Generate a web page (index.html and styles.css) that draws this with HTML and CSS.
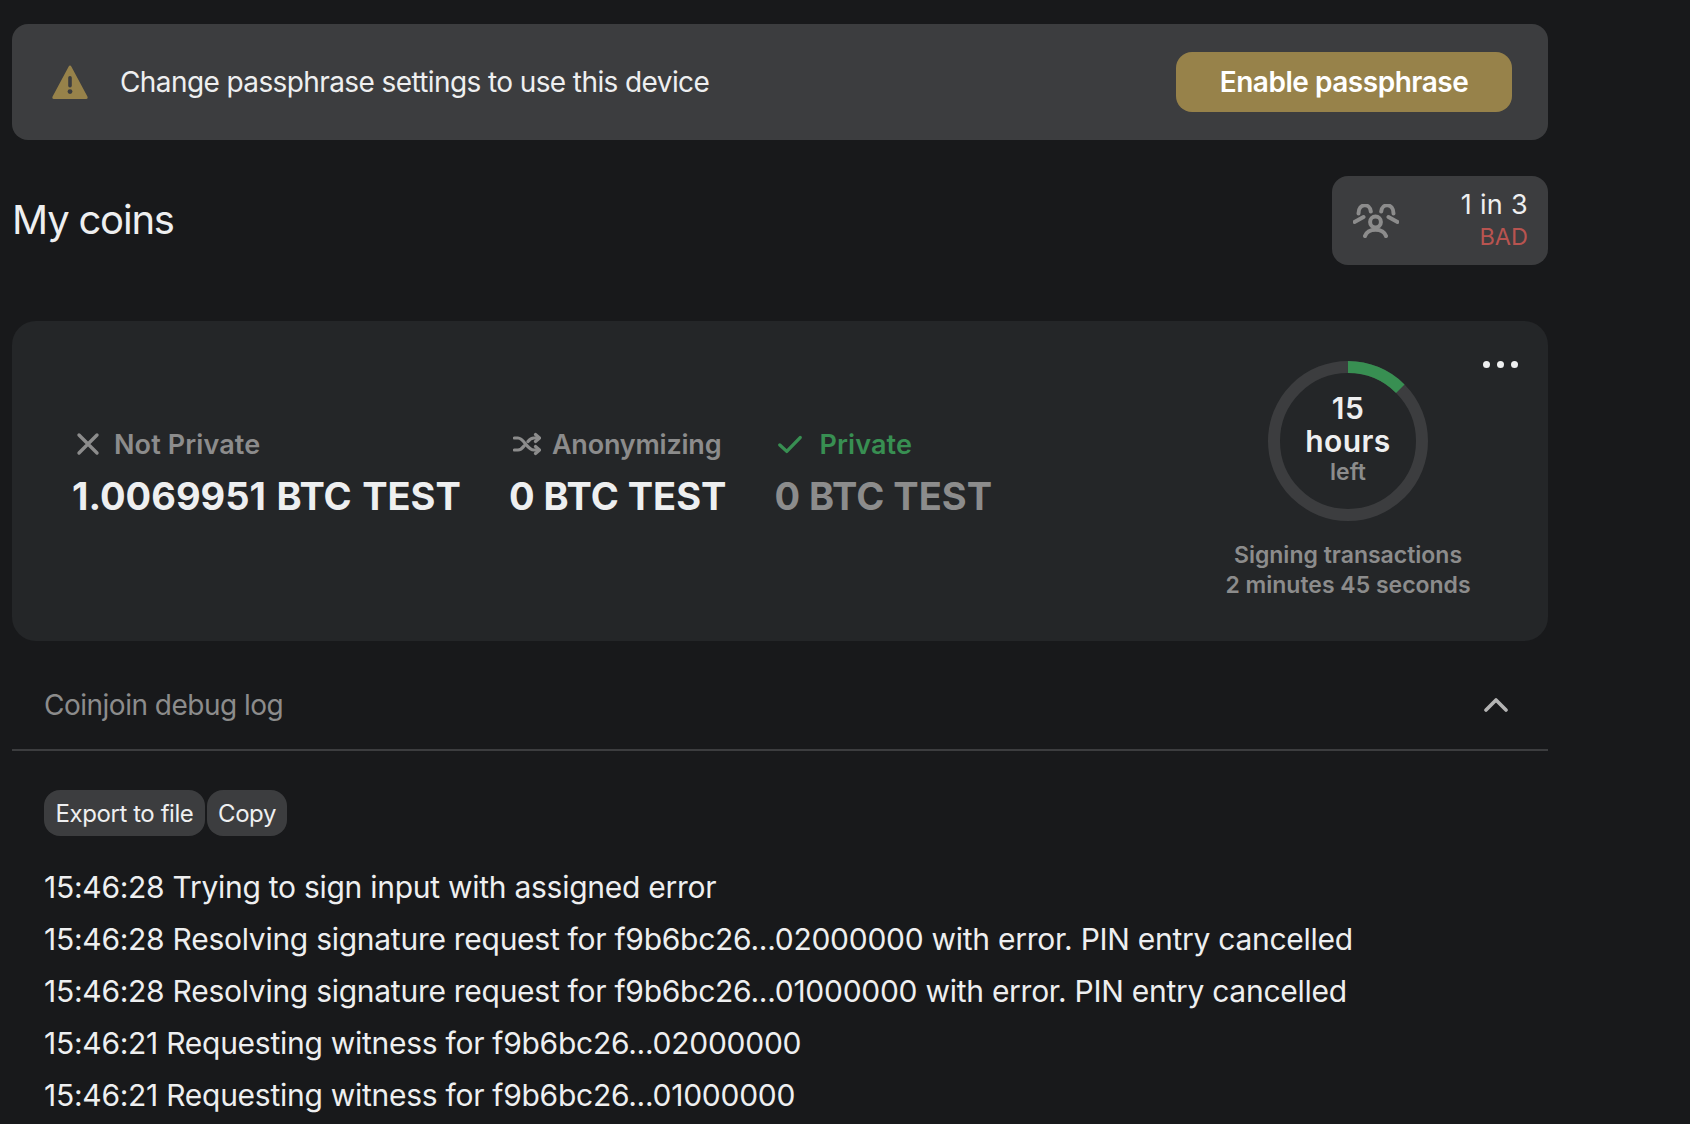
FILE: index.html
```html
<!DOCTYPE html>
<html lang="en">
<head>
<meta charset="utf-8">
<title>My coins</title>
<link rel="stylesheet" href="styles.css">
</head>
<body>
<main class="page">
  <section class="banner">
    <div class="banner-msg">
      <svg class="warn-icon" viewBox="0 0 36 34"><path d="M18 0.5 C18.6 0.5 19 0.9 19.3 1.6 L35.4 31.6 C36 32.8 35.6 34 34.2 34 L1.8 34 C0.4 34 0 32.8 0.6 31.6 L16.7 1.6 C17 0.9 17.4 0.5 18 0.5Z" fill="#97824a"/><rect x="16.2" y="11" width="3.6" height="11.5" rx="1.8" fill="#3c3d3f"/><circle cx="18" cy="26.6" r="2.4" fill="#3c3d3f"/></svg>
      <span>Change passphrase settings to use this device</span>
    </div>
    <button class="enable-btn">Enable passphrase</button>
  </section>

  <header class="coins-head">
    <h1>My coins</h1>
    <div class="anon-badge">
      <svg class="users-icon" viewBox="0 0 46 34" fill="none" stroke="#8c8c8c" stroke-width="4" stroke-linecap="round"><circle cx="22.500" cy="18" r="5.400"/><path d="M12 32 C15 23.500 30 23.500 33 32"/><path d="M5.500 9.500 C5.500 -1 17 -1 17.800 7.500"/><path d="M1.500 18 L10.500 13"/><path d="M40.500 9.500 C40.500 -1 29 -1 28.200 7.500"/><path d="M44.500 18 L35.500 13"/></svg>
      <div class="anon-text"><span class="anon-num">1 in 3</span><span class="anon-bad">BAD</span></div>
    </div>
  </header>

  <section class="card">
    <div class="balances">
      <div class="balance">
        <div class="bal-label"><svg class="bal-icon" viewBox="0 0 24 24" fill="none" stroke="#8c8c8c" stroke-width="3.400" stroke-linecap="round"><path d="M3 3 L21 21 M21 3 L3 21"/></svg>Not Private</div>
        <div class="bal-value is-long">1.0069951 BTC TEST</div>
      </div>
      <div class="balance">
        <div class="bal-label is-tight"><svg class="shuffle-icon" viewBox="0 0 28 24" fill="none" stroke="#8c8c8c" stroke-width="3.200" stroke-linecap="round" stroke-linejoin="round"><path d="M1.500 6 H5 C11 6 14 18 21 18 H25 M1.500 18 H5 C7.500 18 9.500 16 11 14 M15 9.500 C16.500 7.500 18.500 6 21 6 H25"/><path d="M22.500 2.500 L26.500 6 L22.500 9.500 M22.500 14.500 L26.500 18 L22.500 21.500"/></svg>Anonymizing</div>
        <div class="bal-value">0 BTC TEST</div>
      </div>
      <div class="balance">
        <div class="bal-label is-green"><svg class="check-icon" viewBox="0 0 26 24" fill="none" stroke="#388f52" stroke-width="3.600" stroke-linecap="round" stroke-linejoin="round"><path d="M2 13 L9.500 20 L24 5"/></svg>Private</div>
        <div class="bal-value is-muted">0 BTC TEST</div>
      </div>
    </div>
    <div class="status">
      <div class="ring">
        <svg class="ring-svg" viewBox="0 0 160 160" fill="none"><circle cx="80" cy="80" r="74" stroke="#3c3d3f" stroke-width="12"/><path d="M80 6 A74 74 0 0 1 132.300 27.700" stroke="#388f52" stroke-width="12"/></svg>
        <div class="ring-text"><span class="ring-num">15</span><span class="ring-num">hours</span><span class="ring-left">left</span></div>
      </div>
      <div class="status-text">Signing transactions<br>2 minutes 45 seconds</div>
    </div>
    <div class="dots"><i></i><i></i><i></i></div>
  </section>

  <section class="log">
    <div class="log-head">
      <span>Coinjoin debug log</span>
      <svg class="chevron" viewBox="0 0 24 14" fill="none" stroke="#b4b4b4" stroke-width="3.600" stroke-linecap="round" stroke-linejoin="round"><path d="M2 12 L12 2 L22 12"/></svg>
    </div>
    <div class="log-body">
      <div class="log-actions"><button class="small-btn">Export to file</button><button class="small-btn">Copy</button></div>
      <p class="log-line">15:46:28 Trying to sign input with assigned error</p>
      <p class="log-line">15:46:28 Resolving signature request for f9b6bc26...02000000 with error. PIN entry cancelled</p>
      <p class="log-line">15:46:28 Resolving signature request for f9b6bc26...01000000 with error. PIN entry cancelled</p>
      <p class="log-line">15:46:21 Requesting witness for f9b6bc26...02000000</p>
      <p class="log-line">15:46:21 Requesting witness for f9b6bc26...01000000</p>
    </div>
  </section>
</main>
</body>
</html>
```
FILE: styles.css
```css
* { box-sizing: border-box; }
html, body { margin: 0; height: 100%; overflow: hidden; background: #18191b; }
body { font-family: Inter, "Noto Sans", sans-serif; color: #eeeff0; }
.page { width: 1536px; margin-left: 12px; padding-top: 24px; }

.banner { height: 116px; background: #3c3d3f; border-radius: 16px; display: flex; align-items: center; justify-content: space-between; padding: 0 36px 0 40px; }
.banner-msg { display: flex; align-items: center; gap: 32px; font-size: 28px; letter-spacing: -0.6px; font-weight: 400; }
.banner-msg span { padding-bottom: 1px; }
.warn-icon { width: 36px; height: 34px; }
.enable-btn { width: 336px; height: 60px; padding: 0 0 1px; border: 0; border-radius: 16px; background: #97824a; color: #fff; font: 600 28px Inter, sans-serif; letter-spacing: -0.47px; }

.coins-head { display: flex; justify-content: space-between; align-items: center; margin-top: 36px; }
.coins-head h1 { margin: 0 0 3px; font-size: 40px; letter-spacing: -1.2px; font-weight: 400; color: #eeeff0; }
.anon-badge { width: 216px; height: 89px; background: #3c3d3f; border-radius: 16px; display: flex; align-items: center; justify-content: space-between; padding: 0 20px 0 21px; }
.users-icon { width: 46px; height: 34px; }
.anon-text { display: flex; flex-direction: column; align-items: flex-end; }
.anon-num { font-size: 27px; line-height: 32px; letter-spacing: 0.3px; }
.anon-bad { font-size: 23.500px; line-height: 32px; color: #b85450; }

.card { position: relative; height: 320px; margin-top: 56px; background: #242628; border-radius: 24px; display: flex; justify-content: space-between; align-items: flex-start; padding: 40px 70px 0 60px; }
.balances { display: flex; gap: 48px; margin-top: 64px; }
.bal-label { display: flex; align-items: center; gap: 14px; height: 38px; font-size: 27px; letter-spacing: 0.1px; font-weight: 600; color: #8c8c8c; padding-left: 4px; }
.bal-label.is-tight { letter-spacing: -0.2px; }
.bal-label.is-green { color: #388f52; }
.bal-icon { width: 24px; height: 24px; flex: none; }
.shuffle-icon { width: 28px; height: 24px; flex: none; margin-right: -3px; }
.check-icon { width: 24px; height: 24px; flex: none; margin-right: 3px; }
.bal-value { margin-top: 8px; font-size: 38px; line-height: 50px; font-weight: 700; white-space: nowrap; }
.bal-value.is-long { word-spacing: 1.500px; }
.bal-value.is-muted { color: #8c8c8c; }

.status { width: 260px; display: flex; flex-direction: column; align-items: center; }
.ring { position: relative; width: 160px; height: 160px; }
.ring-svg { display: block; width: 160px; height: 160px; }
.ring-text { position: absolute; inset: 0; padding-bottom: 3px; display: flex; flex-direction: column; align-items: center; justify-content: center; }
.ring-num { font-size: 30px; letter-spacing: 0.4px; font-weight: 600; line-height: 33px; }
.ring-left { font-size: 23px; font-weight: 600; line-height: 29px; color: #8c8c8c; }
.status-text { margin-top: 19px; font-size: 23px; line-height: 30px; font-weight: 600; color: #8c8c8c; text-align: center; white-space: nowrap; }
.dots { position: absolute; top: 40px; right: 30px; display: flex; gap: 7px; }
.dots i { width: 7px; height: 7px; border-radius: 50%; background: #eeeff0; }

.log-head { height: 110px; padding: 19px 40px 0 32px; border-bottom: 2px solid #3c3d3f; display: flex; align-items: center; justify-content: space-between; font-size: 28px; letter-spacing: -0.5px; color: #8c8c8c; }
.chevron { width: 24px; height: 14px; }
.log-body { padding: 39px 32px 0; }
.log-actions { display: flex; gap: 2px; margin-bottom: 25px; }
.small-btn { height: 46px; width: 161px; padding: 0; border: 0; border-radius: 16px; background: #3c3d3f; color: #eeeff0; font: 400 24px Inter, sans-serif; letter-spacing: -0.43px; }
.small-btn:last-child { width: 80px; }
.log-line { margin: 0; height: 52px; line-height: 52px; font-size: 30px; letter-spacing: -0.27px; white-space: nowrap; }
```
